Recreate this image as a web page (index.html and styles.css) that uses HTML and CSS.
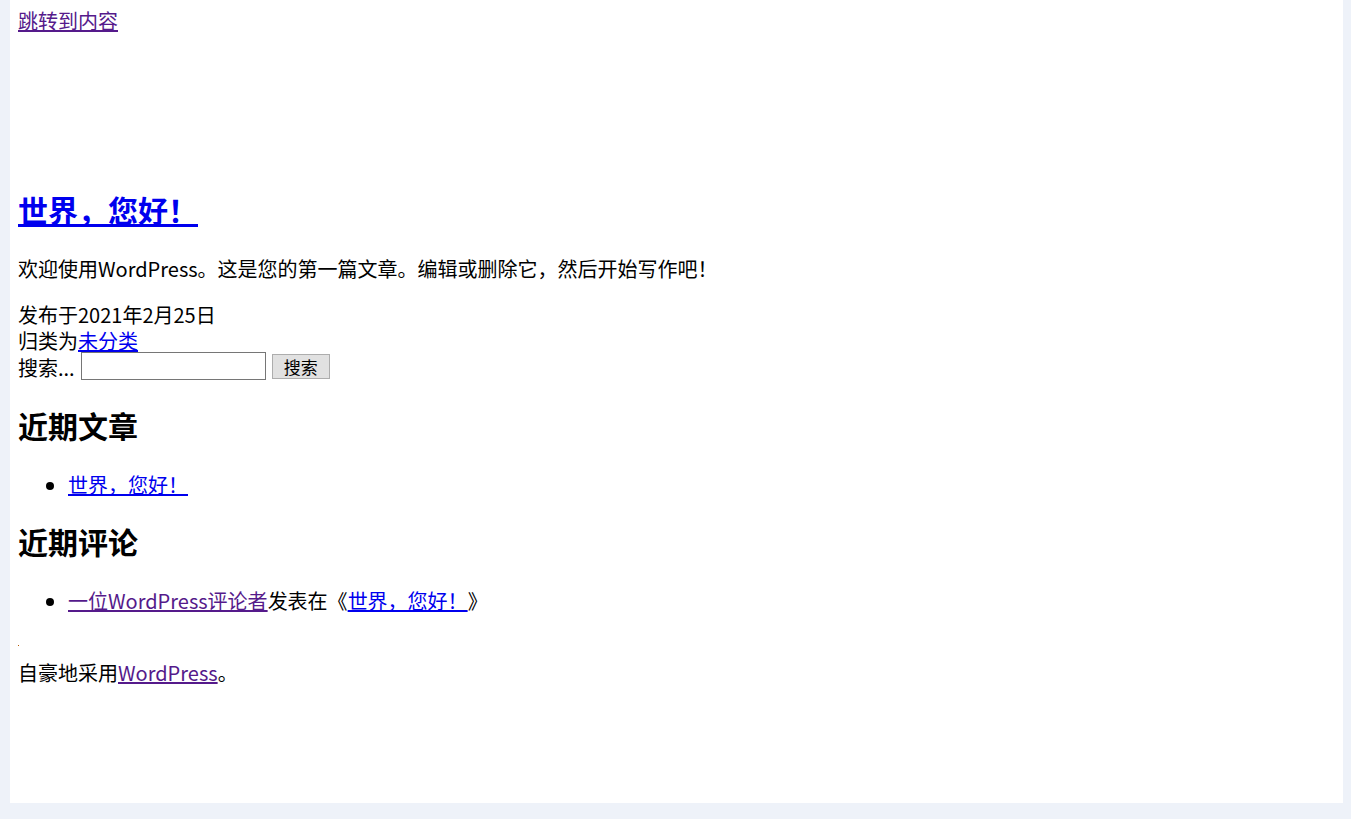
FILE: index.html
```html
<!DOCTYPE html>
<html lang="zh-CN">
<head>
<meta charset="utf-8">
<title>世界，您好！</title>
<link rel="stylesheet" href="styles.css">
</head>
<body>
<a class="skip-link visited" href="#content">跳转到内容</a>
<header class="site-header"></header>
<main id="content" class="site-main">
  <article class="post">
    <h2 class="entry-title"><a href="#">世界，您好！</a></h2>
    <p class="entry-content">欢迎使用WordPress。这是您的第一篇文章。编辑或删除它，然后开始写作吧！</p>
    <div class="entry-meta">
      <div class="meta-line">发布于2021年2月25日</div>
      <div class="meta-line">归类为<a href="#">未分类</a></div>
    </div>
  </article>
  <aside class="widgets">
    <form class="search-form">
      <label class="search-label" for="s">搜索...</label>
      <input class="search-field" id="s" type="search">
      <button class="search-submit" type="button">搜索</button>
    </form>
    <section class="widget">
      <h2 class="widget-title">近期文章</h2>
      <ul class="widget-list">
        <li><a href="#">世界，您好！</a></li>
      </ul>
    </section>
    <section class="widget">
      <h2 class="widget-title">近期评论</h2>
      <ul class="widget-list">
        <li><a class="visited" href="#">一位WordPress评论者</a>发表在《<a href="#">世界，您好！</a>》</li>
      </ul>
    </section>
  </aside>
</main>
<footer class="site-footer">
  <div class="dot"></div>
  <p class="credit">自豪地采用<a class="visited" href="#">WordPress</a>。</p>
</footer>
</body>
</html>
```
FILE: styles.css
```css
html {
  background: #eef2f9;
}
body {
  margin: 0 8px 16px 10px;
  padding: 8px;
  box-sizing: border-box;
  min-height: calc(100vh - 16px);
  background: #ffffff;
  color: #000000;
  font-family: "Noto Sans CJK SC", "Noto Sans", sans-serif;
  font-size: 20px;
  line-height: 26px;
}
a {
  color: #0000ee;
  text-decoration: underline;
}
a.visited {
  color: #551a8b;
}
.skip-link {
  display: inline-block;
}
.site-header {
  height: 132px;
}
h2 {
  font-size: 30px;
  line-height: 36px;
  font-weight: 700;
  margin: 25px 0 29px;
}
p {
  margin: 20px 0;
}
.search-form {
  display: flex;
  align-items: center;
  height: 28px;
  margin: 0;
}
.search-label {
  margin-right: 6px;
}
.search-field {
  box-sizing: border-box;
  width: 185px;
  height: 28px;
  border: 1px solid #767676;
  border-radius: 0;
  padding: 1px 2px;
  margin: -4px 0 0;
  font: inherit;
  font-size: 16px;
}
.search-submit {
  box-sizing: border-box;
  width: 58px;
  height: 25px;
  margin: -4px 0 0 6px;
  padding: 0;
  border: 1px solid #adadad;
  border-radius: 0;
  background: #e1e1e1;
  color: #000;
  font-family: "Noto Sans CJK SC", sans-serif;
  font-size: 17px;
  line-height: 23px;
}
.widget-list {
  margin: 20px 0;
  padding-left: 50px;
  list-style: disc;
}
.site-footer {
  display: flow-root;
}
.dot {
  width: 1px;
  height: 1px;
  margin-top: 11px;
  background: #b85a00;
}
.credit {
  margin: 14px 0 20px;
}
```
